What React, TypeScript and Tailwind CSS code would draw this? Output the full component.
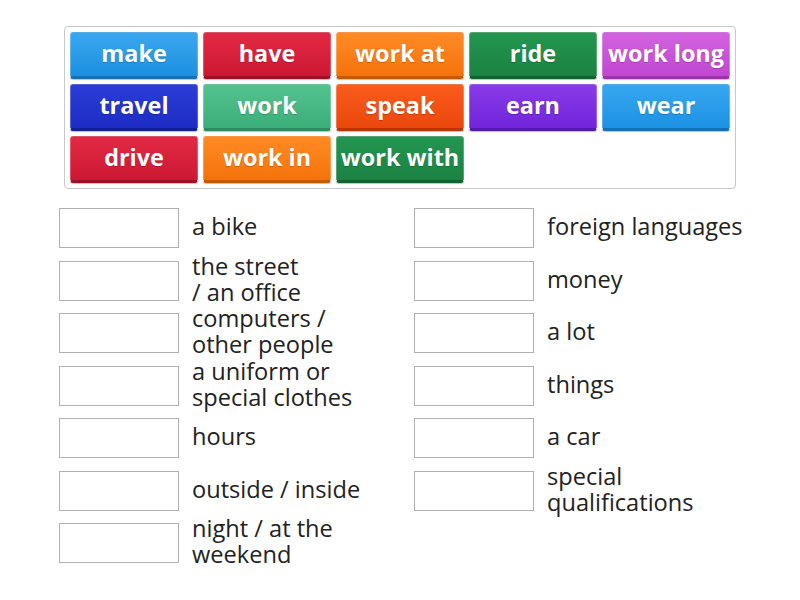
import React from "react";

const tiles: { t: string; c: string }[] = [
  { t: "make", c: "bg-gradient-to-b from-[#3aa8f0] to-[#1b8fe0] border-b-[#166fb0]" },
  { t: "have", c: "bg-gradient-to-b from-[#e32944] to-[#cc1833] border-b-[#9c1024]" },
  { t: "work at", c: "bg-gradient-to-b from-[#ff8a24] to-[#f57308] border-b-[#c45a00]" },
  { t: "ride", c: "bg-gradient-to-b from-[#23964f] to-[#1b8243] border-b-[#126332]" },
  { t: "work long", c: "bg-gradient-to-b from-[#d362df] to-[#c146d2] border-b-[#9a33aa]" },
  { t: "travel", c: "bg-gradient-to-b from-[#2a3dd6] to-[#1d2cc4] border-b-[#141f94]" },
  { t: "work", c: "bg-gradient-to-b from-[#53c28f] to-[#3cae7a] border-b-[#2c8a5f]" },
  { t: "speak", c: "bg-gradient-to-b from-[#fa5c1c] to-[#ea470c] border-b-[#b83608]" },
  { t: "earn", c: "bg-gradient-to-b from-[#8a3ae8] to-[#7124db] border-b-[#5519ad]" },
  { t: "wear", c: "bg-gradient-to-b from-[#36a6f0] to-[#1c92e4] border-b-[#166fb0]" },
  { t: "drive", c: "bg-gradient-to-b from-[#e32944] to-[#cc1833] border-b-[#9c1024]" },
  { t: "work in", c: "bg-gradient-to-b from-[#ff8a24] to-[#f57308] border-b-[#c45a00]" },
  { t: "work with", c: "bg-gradient-to-b from-[#23964f] to-[#1b8243] border-b-[#126332]" },
];

const left = [
  ["a bike"],
  ["the street", "/ an office"],
  ["computers /", "other people"],
  ["a uniform or", "special clothes"],
  ["hours"],
  ["outside / inside"],
  ["night / at the", "weekend"],
];

const right = [
  ["foreign languages"],
  ["money"],
  ["a lot"],
  ["things"],
  ["a car"],
  ["special", "qualifications"],
];

function Row({ lines }: { lines: string[] }) {
  return (
    <div className="flex h-[52.5px] items-center">
      <div className="h-[40px] w-[120px] shrink-0 border border-[#b0b0b0] bg-white" />
      <div className="mb-[4px] ml-[13px] whitespace-nowrap text-[23.6px] leading-[26px] text-[#222]">
        {lines.map((l, i) => (
          <div key={i}>{l}</div>
        ))}
      </div>
    </div>
  );
}

export default function App() {
  return (
    <div
      className="h-[600px] w-[800px] bg-white"
      style={{ fontFamily: '"Open Sans", "Noto Sans", sans-serif' }}
    >
      <div className="pl-[64px] pt-[26px]">
        <div className="grid w-[672px] grid-cols-5 gap-[5px] rounded-[4px] border border-[#c8c8c8] p-[5px]">
          {tiles.map((x) => (
            <div
              key={x.t}
              className={`flex h-[47px] items-center justify-center whitespace-nowrap rounded-[3px] border border-b-[3px] border-white/25 pb-[2px] text-[23.4px] font-bold text-white shadow-[0_1px_1px_rgba(0,0,0,0.25)] [text-shadow:0_1px_1px_rgba(0,0,0,0.2)] ${x.c}`}
            >
              {x.t}
            </div>
          ))}
        </div>
      </div>
      <div className="mt-[12.75px] flex pl-[59px]">
        <div className="w-[355px]">
          {left.map((l, i) => (
            <Row key={i} lines={l} />
          ))}
        </div>
        <div>
          {right.map((l, i) => (
            <Row key={i} lines={l} />
          ))}
        </div>
      </div>
    </div>
  );
}
